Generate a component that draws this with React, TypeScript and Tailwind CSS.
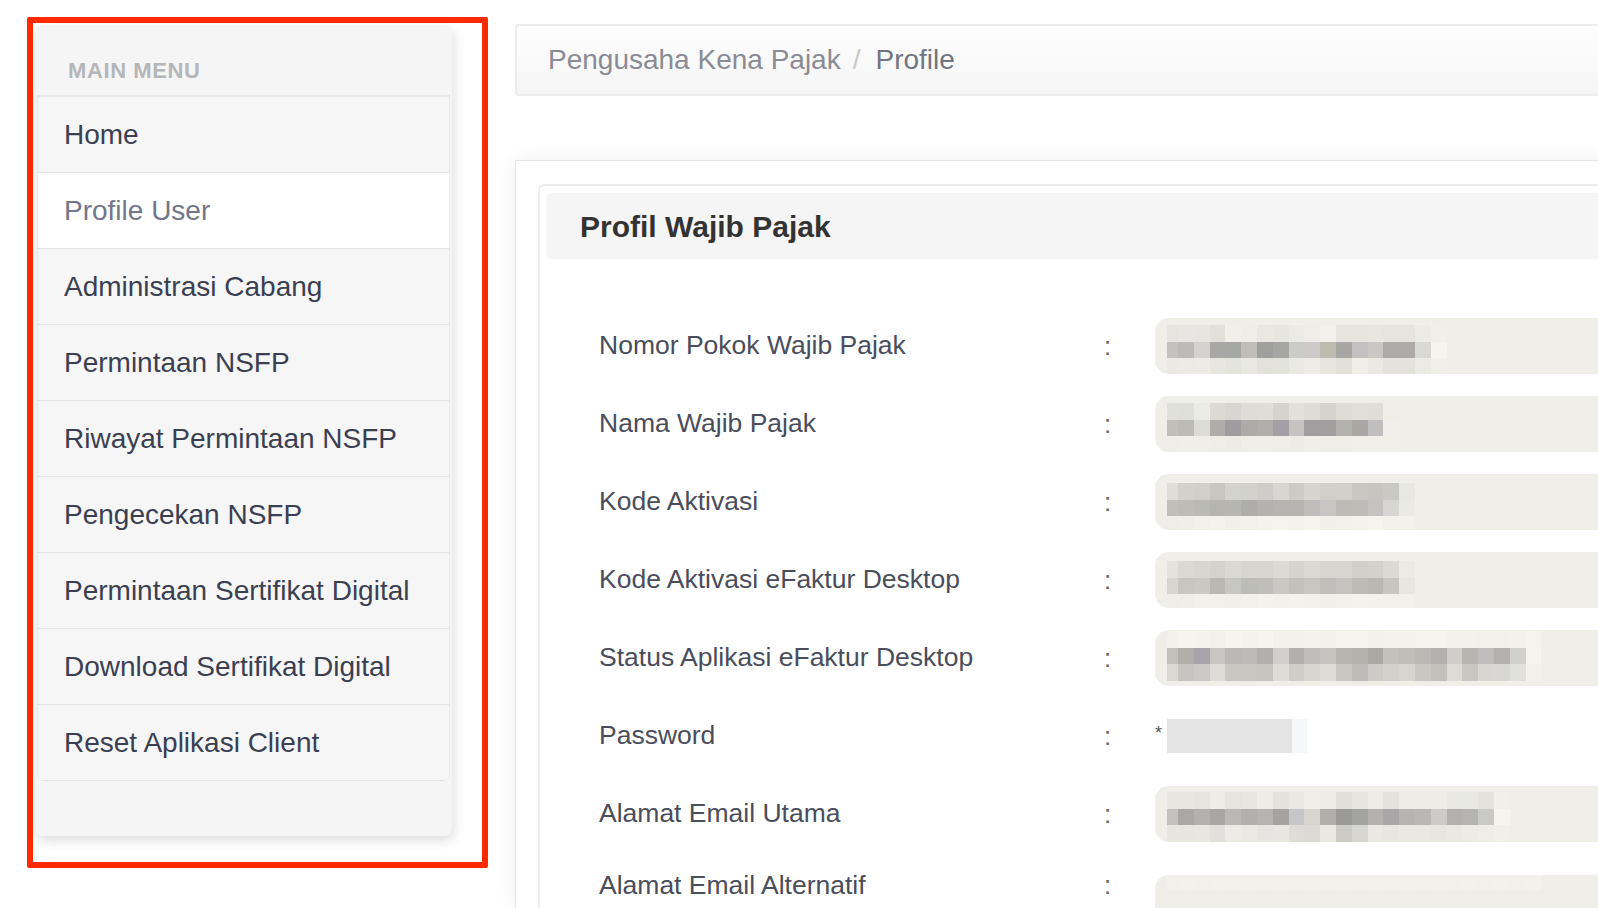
import React from "react";

const menu = [
  "Home",
  "Profile User",
  "Administrasi Cabang",
  "Permintaan NSFP",
  "Riwayat Permintaan NSFP",
  "Pengecekan NSFP",
  "Permintaan Sertifikat Digital",
  "Download Sertifikat Digital",
  "Reset Aplikasi Client",
];

// pixelated (redacted) values: one string per mosaic row, first block is the narrow one
type Blur = { top: number; rows: string[] };

const blurs: Record<string, Blur> = {
  npwp: {
    top: 7,
    rows: [
      "e6e4de e8e6e2 e6e5df e2e0da f0efe9 eeede6 e8e7e2 e6e5df eaebe6 efede7 f2f1eb e6e4de e6e4de e8e6e0 e6e4de e6e4de ebebe5 f1efe9",
      "c4c2be bcbbba d4d3cd a7a7a5 a6a8a3 bfbdb6 9f9f9d a5a6a1 ccccc6 cdcac9 bdbbae a6a6a3 c3c1c2 cac8c4 aeaaa8 aeaaa8 d8d9d5 f6f4ee",
      "ebe9e4 eceae4 ecebe5 e7e6e0 e4e4de e8e7e1 e2e1dc e3e3de ebe9e4 eeece7 e6e5df e2e0d9 efeee8 ebe9e3 e4e2dc e4e2dc ebebe5 f1efe9",
    ],
  },
  nama: {
    top: 7,
    rows: [
      "e0e0db dfdfda ebebe6 dcd9d4 d8d6d2 dedcd7 dfddd8 d5d3ce e1e1dc dedcd7 d5d3ce dedcd7 e0ded9 dfddd8 f0eee8",
      "c0bfba bcbbb6 dcdcd6 b0aca9 9e9c9e acaba7 b0aea9 a2a0a4 c4c3bf a19e9f a19e9f b0b2ab aaa6a3 c0bfbf f0efe9",
      "eeede7 efeee8 efeee8 eeede7 ecebe5 efeee8 efeee8 eeede7 ecebe5 efeee8 eeede7 eeede7 f0efe9 f0efe9 f0efe9",
    ],
  },
  kode: {
    top: 9,
    rows: [
      "e0ddd8 d2d1cc d0cfca c8c6c1 d3d3ce d2d1cb cfcdc9 d7d6d1 cdcbc6 d5d5cf d0cfca d1d0ca c9c7c2 c6c5c1 c9c9c4 e8e8e3",
      "c2bfbb bdbcb7 b9bab4 b5b4af b5b5b1 afadaa b3b2ae b5b4b0 b5b4b0 bebdb9 c8c5c4 bebbb6 bfbcb8 c5c3c2 d5d6d2 eaeae5",
      "eeede7 efeee8 f1f0ea f3f2ec f0efe9 f1f0ea f3f2ec f4f3ed f3f2ec f4f3ed f0efe9 f1f0ea f3f2ec f4f3ed f1f0ea f1f0ea",
    ],
  },
  desktop: {
    top: 9,
    rows: [
      "e4e2dd dad8d3 d8d6d1 d4d2cd dad8d3 d6d5d0 d8d6d1 dcdad5 d4d3ce d9d8d3 d6d5d0 d7d6d1 d0cfca d2d1cc dad9d4 ebebe6",
      "d8d5d0 c8c6c1 c9c8c3 b9b8b3 c6c7c2 bdbdb8 c0bebb c9c8c3 c1c0bb c7c6c1 c2bebb c5c3c0 bebab5 b8b7b3 c6c5c0 e7e7e2",
      "eeede7 efeee8 f1f0ea f1f0ea f0efe9 f1f0ea f3f2ec f2f1eb f3f2ec f2f1eb f0efe9 f1f0ea f3f2ec f2f1eb f1f0ea f1f0ea",
    ],
  },
  status: {
    top: 1,
    rows: [
      "f3f1eb f5f3ed f3f2ec f2f0ea f6f4ee f4f2ec f6f4ee f3f1eb f3f1eb f4f2ec f2f0ea f6f4ee f5f3ed f3f1eb f4f2ec f4f2ec f5f3ed f5f3ed f3f1eb f3f1eb f2f0ea f2f0ea f3f1eb f5f3ed",
      "c2c0bb b0aeaa a8a3a8 c7c6c2 bab9b5 bcbbb7 b3afae d0cfcb b3afae bfbdbb c5c3bd b5b4b0 b4b1ad aba8a6 c3c1bc bebdb7 bab9b3 b4b2b0 d0cec9 b7b5af bfbdbd b5b0b0 d0d0cc f5f4ef",
      "d9d8d1 c6c5c0 cbc9c8 dcdbd5 c8c7c2 c7c6c1 c6c5c0 dedcd7 cfcdc8 d9d6d2 dcdbd5 c8c7c1 bfbbb8 cdcbc7 d2d1cc d7d5d0 c8c7c1 c2c0bc dcdbd6 c8c7c1 d7d6d1 d8d7d3 e1e1dc f2f0ea",
    ],
  },
  email: {
    top: 6,
    rows: [
      "e8e6e0 e8e6e0 e6e4de eeece6 e6e4de e8e6e0 eeece6 e4e2dc e8e8e3 efede7 eeece6 e0dfd9 e6e6e1 eeece6 e4e2dc eeece6 eeece6 eeece6 e8e8e3 e8e8e3 e4e2dc f1efe9",
      "c4c2be a9a8a5 b4b2ad a9a6a6 bab9b5 b2b0ad b6b4b2 a5a2a0 c6c6c9 d8d5d1 b0afac 9a9a98 a3a4a2 b4b1ae a9a6a7 b7b5b2 b9b8b6 cdcbc7 b3b1ae b5b4b0 c9c9c6 f5f3ed",
      "e6e5df e6e5df e8e6e0 e1e0dc ecebe5 eae9e3 e6e5e1 e8e6e0 dedcd7 dbdad6 e9e9e4 cdcbc6 d5d6d2 e9e8e2 e8e6e0 e9e8e2 e9e8e2 e8e6e0 e9e8e2 ecebe5 eeede7 f1efe9",
    ],
  },
  alt: {
    top: -2,
    rows: [
      "f2f0eb f3f1ec f2f0eb f3f1ec f2f0eb f3f1ec f2f0eb f3f1ec f2f0eb f3f1ec f2f0eb f3f1ec f2f0eb f3f1ec f2f0eb f3f1ec f2f0eb f3f1ec f2f0eb f3f1ec f2f0eb f3f1ec f2f0eb f3f1ec",
    ],
  },
};

function BlurField({ blur }: { blur: Blur }) {
  return (
    <div className="h-[56px] flex-1 overflow-hidden rounded-l-[14px] bg-[#f0eee8]">
      <svg width="420" height="56" className="ml-[12px] block" shapeRendering="crispEdges">
        {blur.rows.map((row, r) =>
          row.split(" ").map((c, i) => (
            <rect
              key={`${r}-${i}`}
              x={i === 0 ? 0 : 11 + (i - 1) * 15.8}
              y={blur.top + r * 16.5}
              width={i === 0 ? 11 : 15.8}
              height={16.5}
              fill={`#${c}`}
            />
          ))
        )}
      </svg>
    </div>
  );
}

function PasswordValue() {
  return (
    <div className="flex h-[56px] flex-1 items-center">
      <span className="w-[12px] -mt-[6px] text-[18px] leading-none text-[#555]">*</span>
      <div className="h-[34px] w-[125px] bg-[#e4e4e4]" />
      <div className="h-[34px] w-[15px] bg-[#f6f7f9]" />
    </div>
  );
}

const rows: { label: string; value: React.ReactNode }[] = [
  { label: "Nomor Pokok Wajib Pajak", value: <BlurField blur={blurs.npwp} /> },
  { label: "Nama Wajib Pajak", value: <BlurField blur={blurs.nama} /> },
  { label: "Kode Aktivasi", value: <BlurField blur={blurs.kode} /> },
  { label: "Kode Aktivasi eFaktur Desktop", value: <BlurField blur={blurs.desktop} /> },
  { label: "Status Aplikasi eFaktur Desktop", value: <BlurField blur={blurs.status} /> },
  { label: "Password", value: <PasswordValue /> },
  { label: "Alamat Email Utama", value: <BlurField blur={blurs.email} /> },
];

export default function App() {
  return (
    <div className="flex h-[908px] w-[1598px] overflow-hidden bg-white font-['Liberation_Sans',Arial,sans-serif]">
      {/* SIDEBAR (highlighted) */}
      <div className="ml-[27px] mt-[17px] h-[851px] w-[461px] shrink-0 rounded-[2px] border-[6px] border-[#ff2a00] pl-[2px] pt-[2px]">
        <div className="flex h-[811px] w-[417px] flex-col rounded-[8px] bg-[#f5f5f5] shadow-[2px_5px_12px_rgba(0,0,0,0.13)]">
          <div className="h-[70px] shrink-0 pl-[33px] pt-[35px] text-[22px] font-bold uppercase leading-[22px] tracking-[0.6px] text-[#b5b6ba]">
            Main Menu
          </div>
          <ul className="mx-[2px] shrink-0 overflow-hidden rounded-b-[7px] border-x border-t-2 border-[#e7e7e7]">
            {menu.map((item) => {
              const active = item === "Profile User";
              return (
                <li
                  key={item}
                  className={
                    active
                      ? "flex h-[76px] items-center border-b border-[#e4e4e4] bg-white pl-[26px] text-[28px] text-[#72768a]"
                      : "flex h-[76px] items-center border-b border-[#e4e4e4] bg-[#f6f6f6] pl-[26px] text-[28px] text-[#3b3f52]"
                  }
                >
                  {item}
                </li>
              );
            })}
          </ul>
        </div>
      </div>

      {/* MAIN */}
      <div className="ml-[27px] mt-[24px] flex w-[1160px] shrink-0 flex-col">
        <div className="flex h-[72px] shrink-0 items-center rounded-[4px] border-2 border-[#ececec] bg-gradient-to-b from-[#fefefe] to-[#f5f5f5] pl-[31px] text-[28px]">
          <span className="text-[#8a8b94]">Pengusaha Kena Pajak</span>
          <span className="px-[12px] text-[#c9c9c9]">/</span>
          <span className="pl-[3px] text-[#72757f]">Profile</span>
        </div>

        <div className="mt-[64px] min-h-0 flex-1 border border-b-0 border-[#e5e5e5] bg-white pl-[22px] pt-[23px] shadow-[0_0_18px_rgba(0,0,0,0.07)]">
          <div className="h-full rounded-tl-[6px] border-2 border-b-0 border-[#ececec] pl-[6px] pt-[7px]">
            <div className="flex h-[66px] items-center rounded-[6px] bg-[#f5f5f5] pl-[34px] text-[30px] font-bold text-[#333]">
              Profil Wajib Pajak
            </div>

            <div className="mt-[48px] pl-[53px]">
              {rows.map((row) => (
                <div key={row.label} className="flex h-[78px] items-center">
                  <div className="w-[504px] text-[26.5px] text-[#4a4d5c]">{row.label}</div>
                  <div className="w-[52px] pl-[1px] text-[26px] text-[#666]">:</div>
                  {row.value}
                </div>
              ))}
              {/* last row sits a little tighter and is cut by the window */}
              <div className="flex h-[90px] items-start">
                <div className="w-[504px] pt-[13px] text-[26.5px] text-[#4a4d5c]">Alamat Email Alternatif</div>
                <div className="w-[52px] pl-[1px] pt-[13px] text-[26px] text-[#666]">:</div>
                <div className="mt-[22px] flex flex-1">
                  <BlurField blur={blurs.alt} />
                </div>
              </div>
            </div>
          </div>
        </div>
      </div>
    </div>
  );
}
